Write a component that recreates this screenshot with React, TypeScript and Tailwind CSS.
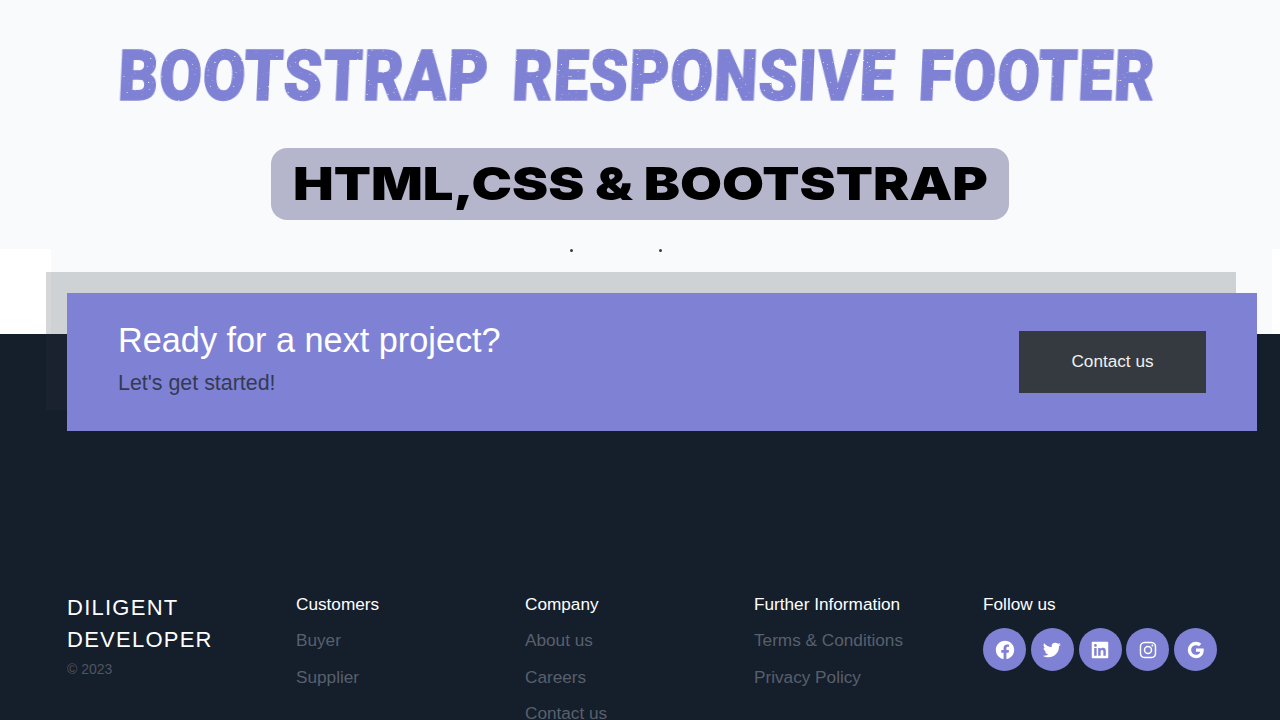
import {
  BiLogoFacebookCircle,
  BiLogoGoogle,
  BiLogoInstagram,
  BiLogoLinkedinSquare,
  BiLogoTwitter,
} from "react-icons/bi";

const columns = [
  { title: "Customers", links: ["Buyer", "Supplier"] },
  { title: "Company", links: ["About us", "Careers", "Contact us"] },
  { title: "Further Information", links: ["Terms & Conditions", "Privacy Policy"] },
];

const socials = [BiLogoFacebookCircle, BiLogoTwitter, BiLogoLinkedinSquare, BiLogoInstagram, BiLogoGoogle];

const App = () => {
  return (
    <div className="h-[720px] overflow-hidden bg-white font-['Liberation_Sans',Arial,sans-serif]">
      {/* speckle for the stamped title */}
      <svg className="absolute w-0 h-0">
        <filter id="grunge" x="0" y="0" width="100%" height="100%">
          <feTurbulence type="fractalNoise" baseFrequency="0.5" numOctaves="2" seed="7" result="noise" />
          <feColorMatrix in="noise" type="matrix" values="0 0 0 0 0  0 0 0 0 0  0 0 0 0 0  0 0 0 -10 8.4" result="specks" />
          <feComposite in="SourceGraphic" in2="specks" operator="in" />
        </filter>
      </svg>

      {/* Title banner */}
      <div className="h-[249px] bg-[#f8fafc] flex flex-col items-center">
        <h1 className="mt-[30px] -ml-[6px] h-[90px] flex items-center scale-x-[0.87] -skew-x-3 font-['Roboto',sans-serif] font-black text-[71px] leading-none tracking-[1.2px] [word-spacing:8px] text-[#7f82d4] [-webkit-text-stroke:1.5px_#7f82d4] uppercase whitespace-nowrap [filter:url(#grunge)]">
          Bootstrap Responsive Footer
        </h1>
        <div className="mt-[28px] w-[738px] h-[72px] rounded-[16px] bg-[#b5b6cc] flex items-center justify-center">
          <span className="-mt-[2px] scale-x-[1.18] font-['Inter',sans-serif] font-black text-[46px] leading-none text-black whitespace-nowrap">
            HTML,CSS &amp; BOOTSTRAP
          </span>
        </div>
      </div>

      {/* Strip behind the card */}
      <div className="relative h-[85px] ml-[51px] mr-[8px] bg-[#f8fafc]">
        <span className="absolute left-[519px] top-0 w-[3px] h-[3px] rounded-full bg-[#3a3a44]" />
        <span className="absolute left-[608px] top-0 w-[3px] h-[3px] rounded-full bg-[#3a3a44]" />
      </div>

      {/* Footer */}
      <footer className="h-[386px] bg-[#151e2b] pl-[67px]">
        <div className="relative -top-[41px] w-[1190px] h-[138px] bg-[#7f82d4] shadow-[-21px_-21px_0_rgba(43,52,58,0.2)] flex items-center justify-between px-[51px]">
          <div className="-mt-[6px]">
            <h2 className="text-[34.25px] leading-[40px] text-white">Ready for a next project?</h2>
            <p className="mt-[8px] text-[21.4px] leading-[30px] text-[#343a55]">Let's get started!</p>
          </div>
          <button className="w-[187px] h-[62px] bg-[#343a40] text-[17.2px] text-[#f1f1f1]">Contact us</button>
        </div>

        <div className="flex mt-[120px]">
          <div className="w-[229px]">
            <div className="text-[22px] leading-[32px] tracking-[1.25px] text-white">
              DILIGENT
              <br />
              DEVELOPER
            </div>
            <p className="mt-[3px] text-[14px] leading-[20px] text-[#4d5562]">© 2023</p>
          </div>

          {columns.map((col) => (
            <div key={col.title} className="w-[229px]">
              <h5 className="text-[17.2px] leading-[24px] text-white">{col.title}</h5>
              <ul className="mt-[12px] flex flex-col gap-[12.5px]">
                {col.links.map((link) => (
                  <li key={link} className="text-[17.2px] leading-[24px] text-[#58606d]">
                    {link}
                  </li>
                ))}
              </ul>
            </div>
          ))}

          <div>
            <h5 className="text-[17.2px] leading-[24px] text-white">Follow us</h5>
            <div className="mt-[12px] flex gap-[4.75px]">
              {socials.map((Icon, i) => (
                <span key={i} className="w-[43px] h-[43px] rounded-full bg-[#7f82d4] flex items-center justify-center text-white">
                  <Icon size={22} />
                </span>
              ))}
            </div>
          </div>
        </div>
      </footer>
    </div>
  );
};

export default App;
